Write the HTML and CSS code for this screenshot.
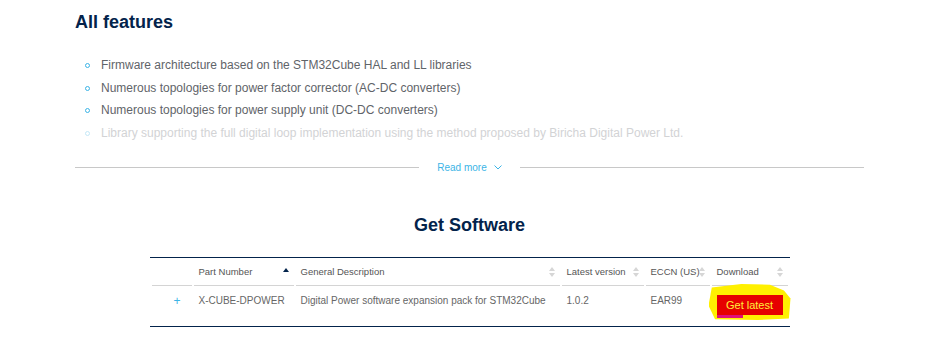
FILE: index.html
```html
<!DOCTYPE html>
<html lang="en">
  <head>
    <meta charset="UTF-8" />
    <meta name="viewport" content="width=device-width, initial-scale=1.0" />
    <title>X-CUBE-DPOWER</title>
    <link rel="stylesheet" href="styles.css">
  </head>
  <body>
    <!-- Features -->
    <div class="container features">
      <h2>All features</h2>
      <ul class="feature-list">
        <li>Firmware architecture based on the STM32Cube HAL and LL libraries</li>
        <li>Numerous topologies for power factor corrector (AC-DC converters)</li>
        <li>Numerous topologies for power supply unit (DC-DC converters)</li>
        <li class="faded">Library supporting the full digital loop implementation using the method proposed by Biricha Digital Power Ltd.</li>
      </ul>
      <div class="read-more">
        <span class="rule"></span>
        <a href="#" class="read-more-link">
          Read more
          <svg width="8" height="5" viewBox="0 0 8 5"><polyline points="0.5,0.5 4,4 7.5,0.5" fill="none" stroke="#3cb4e6" stroke-width="1"/></svg>
        </a>
        <span class="rule"></span>
      </div>
    </div>

    <!-- Software -->
    <div class="container software">
      <h2 class="center">Get Software</h2>
      <div class="table-wrap">
        <table>
          <colgroup>
            <col class="c-expand" />
            <col class="c-part" />
            <col class="c-desc" />
            <col class="c-version" />
            <col class="c-eccn" />
            <col class="c-download" />
          </colgroup>
          <thead>
            <tr>
              <th></th>
              <th>Part Number
                <svg class="sort" width="6" height="10" viewBox="0 0 6 10"><path d="M3 1 L6 5 L0 5Z" fill="#03234b"/></svg>
              </th>
              <th>General Description
                <svg class="sort" width="6" height="10" viewBox="0 0 6 10"><path d="M3 0 L6 4 L0 4Z M0 6 L6 6 L3 10Z" fill="#d6d6d6"/></svg>
              </th>
              <th>Latest version
                <svg class="sort" width="6" height="10" viewBox="0 0 6 10"><path d="M3 0 L6 4 L0 4Z M0 6 L6 6 L3 10Z" fill="#d6d6d6"/></svg>
              </th>
              <th>ECCN (US)
                <svg class="sort" width="6" height="10" viewBox="0 0 6 10"><path d="M3 0 L6 4 L0 4Z M0 6 L6 6 L3 10Z" fill="#d6d6d6"/></svg>
              </th>
              <th>Download
                <svg class="sort" width="6" height="10" viewBox="0 0 6 10"><path d="M3 0 L6 4 L0 4Z M0 6 L6 6 L3 10Z" fill="#d6d6d6"/></svg>
              </th>
            </tr>
          </thead>
          <tbody>
            <tr>
              <td class="expand">+</td>
              <td>X-CUBE-DPOWER</td>
              <td>Digital Power software expansion pack for STM32Cube</td>
              <td>1.0.2</td>
              <td>EAR99</td>
              <td>
                <span class="highlight">
                  <button class="btn-latest">Get latest</button>
                </span>
              </td>
            </tr>
          </tbody>
        </table>
      </div>
    </div>
  </body>
</html>
```

FILE: styles.css
```css
/* General Styles */
body {
  font-family: "Liberation Sans", Arial, sans-serif;
  margin: 0;
  padding: 0;
  background-color: #fff;
}
.container {
  width: 789px;
  margin: 0 0 0 75px;
}
h2 {
  margin: 0;
  font-size: 18px;
  line-height: 22px;
  font-weight: bold;
  color: #03234b;
}
h2.center {
  text-align: center;
}

/* Features */
.features {
  padding-top: 11px;
}
.feature-list {
  list-style: none;
  margin: 21px 0 0;
  padding: 0 0 0 26px;
}
.feature-list li {
  position: relative;
  font-size: 12px;
  line-height: 22.5px;
  color: #5f6469;
  white-space: nowrap;
}
.feature-list li::before {
  content: "";
  position: absolute;
  left: -16px;
  top: 9px;
  width: 3px;
  height: 3px;
  border: 1px solid #3cb4e6;
  border-radius: 50%;
}
.feature-list li.faded {
  color: #d2d3d5;
}
.feature-list li.faded::before {
  border-color: #c4e8f7;
}
.read-more {
  display: flex;
  align-items: center;
  margin-top: 16px;
  height: 14px;
}
.rule {
  flex: 1;
  height: 1px;
  background: #c8c8c8;
}
.read-more-link {
  display: flex;
  align-items: center;
  gap: 7px;
  margin: 0 18px;
  font-size: 10px;
  color: #3cb4e6;
  text-decoration: none;
}

/* Software table */
.software {
  margin-top: 40px;
}
.table-wrap {
  width: 640px;
  margin: 21px auto 0;
  border-top: 1px solid #03234b;
  border-bottom: 1px solid #03234b;
}
table {
  width: 100%;
  table-layout: fixed;
  border-collapse: separate;
  border-spacing: 2px 0;
}
.c-expand { width: 40px; }
.c-part { width: 100px; }
.c-desc { width: 264px; }
.c-version { width: 82px; }
.c-eccn { width: 64px; }
.c-download { width: 76px; }
th {
  position: relative;
  height: 28px;
  padding: 0 0 0 5px;
  text-align: left;
  font-size: 9.5px;
  font-weight: normal;
  color: #555;
  border-bottom: 1px solid #d4d4d4;
  box-sizing: border-box;
}
th .sort {
  position: absolute;
  right: 5px;
  top: 9px;
}
td {
  vertical-align: top;
  padding: 9px 0 11px 5px;
  font-size: 10px;
  line-height: 12px;
  color: #666;
}
td.expand {
  text-align: center;
  padding-left: 11px;
  font-size: 12px;
  color: #3cb4e6;
}

/* Download button with marker highlight */
.highlight {
  position: relative;
  display: inline-block;
  vertical-align: top;
}
.highlight::before {
  content: "";
  position: absolute;
  left: -8px;
  top: -11px;
  right: -8px;
  bottom: -5px;
  background: #fff000;
  clip-path: polygon(4% 10%, 40% 0%, 75% 2%, 92% 18%, 100% 40%, 98% 96%, 60% 100%, 8% 98%, 0% 60%);
}
.highlight::after {
  content: "";
  position: absolute;
  left: 0;
  bottom: -3px;
  width: 26px;
  height: 5px;
  background: #e0107a;
}
.btn-latest {
  position: relative;
  z-index: 1;
  display: block;
  width: 66px;
  height: 20px;
  border: none;
  background: #e60000;
  color: #ffef3a;
  font-family: "Liberation Sans", Arial, sans-serif;
  font-size: 11px;
  padding: 0;
  cursor: pointer;
}
```
